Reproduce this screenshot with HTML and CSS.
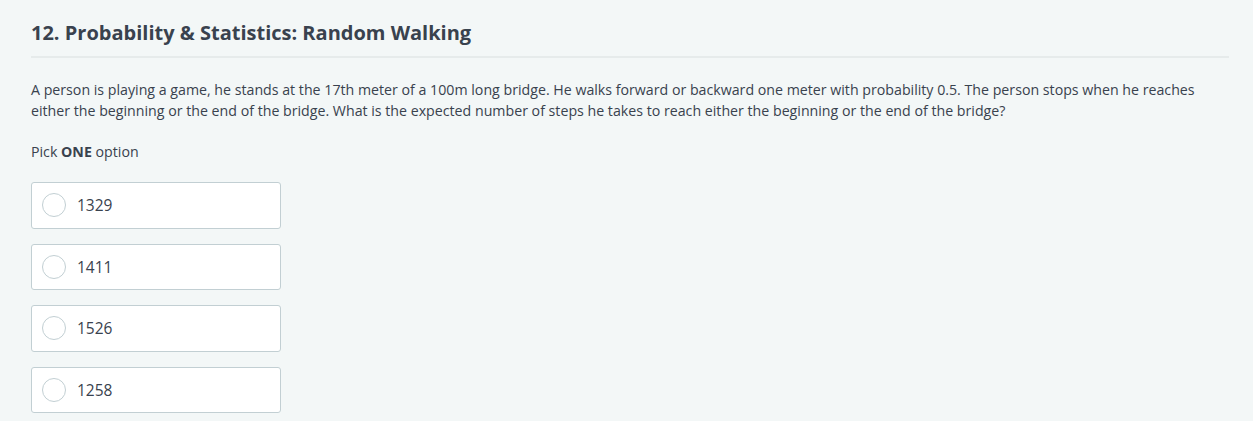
FILE: index.html
```html
<!DOCTYPE html>
<html>
<head>
<meta charset="utf-8">
<link rel="stylesheet" href="styles.css">
</head>
<body>
<div class="page">
  <h1 class="title">12. Probability &amp; Statistics: Random Walking</h1>
  <div class="divider"></div>
  <p class="question">A person is playing a game, he stands at the 17th meter of a 100m long bridge. He walks forward or backward one meter with probability 0.5. The person stops when he reaches either the beginning or the end of the bridge. What is the expected number of steps he takes to reach either the beginning or the end of the bridge?</p>
  <p class="pick">Pick <b>ONE</b> option</p>
  <div class="options">
    <label class="option"><span class="radio"></span><span class="label">1329</span></label>
    <label class="option"><span class="radio"></span><span class="label">1411</span></label>
    <label class="option"><span class="radio"></span><span class="label">1526</span></label>
    <label class="option"><span class="radio"></span><span class="label">1258</span></label>
  </div>
</div>
</body>
</html>
```
FILE: styles.css
```css
html, body {
  margin: 0;
  padding: 0;
  background: #f3f7f7;
}
body {
  font-family: "Open Sans", "Liberation Sans", sans-serif;
  color: #39424e;
}
.page {
  padding: 18px 24px 0 31px;
}
.title {
  margin: 0;
  font-size: 20px;
  font-weight: 700;
  line-height: 30px;
  color: #39424e;
}
.divider {
  height: 2px;
  background: #e6ebeb;
  margin-top: 8px;
}
.question {
  margin: 21px 0 0 0;
  font-size: 14.2px;
  line-height: 21px;
}
.pick {
  margin: 20px 0 0 0;
  font-size: 14.2px;
  line-height: 21px;
}
.pick b {
  font-weight: 700;
}
.options {
  display: flex;
  flex-direction: column;
  gap: 15px;
  margin-top: 20px;
}
.option {
  display: flex;
  align-items: center;
  width: 248px;
  height: 44.5px;
  background: #fff;
  border: 1px solid #c2cfd3;
  border-radius: 3px;
  box-sizing: content-box;
}
.radio {
  width: 22px;
  height: 22px;
  border: 1px solid #c2cfd3;
  border-radius: 50%;
  margin-left: 10px;
  box-sizing: content-box;
}
.label {
  margin-left: 11px;
  font-size: 15.5px;
  color: #39424e;
}
```
